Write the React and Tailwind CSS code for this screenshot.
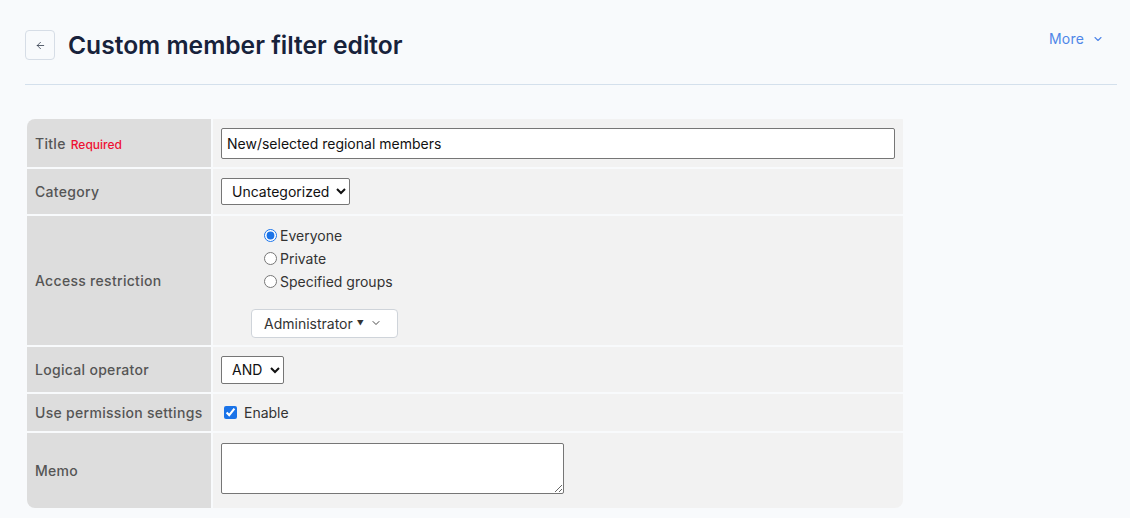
import React from "react";
import { ChevronDown, ArrowLeft } from "lucide-react";

const font = { fontFamily: "Inter, 'Noto Sans', sans-serif" };

function Label({ children }) {
  return (
    <td className="bg-[#dddddd] pl-2 pr-2 align-middle text-[14px] font-medium tracking-[0.3px] text-[#555555] whitespace-nowrap">
      {children}
    </td>
  );
}

function Value({ children, className = "" }) {
  return (
    <td className={"bg-[#f2f2f2] pl-2 align-middle " + className}>{children}</td>
  );
}

export default function App() {
  return (
    <div className="min-h-[518px] w-[1130px] bg-[#f8fafc] text-[#1e293b]" style={font}>
      <div className="flex items-start justify-between pl-[25px] pr-[26px] pt-[30px]">
        <div className="flex items-center gap-[13px]">
          <button className="flex h-[30px] w-[30px] items-center justify-center rounded-[4px] border border-[#d6dde6] bg-[#f8fafc] text-[#1e293b]">
            <ArrowLeft size={11} strokeWidth={1.6} />
          </button>
          <h1 className="text-[24.6px] font-semibold leading-[30px] text-[#17223b]">
            Custom member filter editor
          </h1>
        </div>
        <div className="mt-[-2px] ml-[-2px] flex items-center gap-[8px] text-[14px] tracking-[0.2px] text-[#4f86e8]">
          <span>More</span>
          <ChevronDown size={12} strokeWidth={2.2} />
        </div>
      </div>
      <div className="mx-[25px] mt-[24px] h-px w-[1092px] bg-[#d4e0ec]" />
      <div className="ml-[25px] mt-[32px] w-[880px]">
        <table className="w-[880px] border-separate border-spacing-[2px] overflow-hidden rounded-[8px]">
          <colgroup>
            <col className="w-[184px]" />
            <col />
          </colgroup>
          <tbody>
            <tr className="h-[48px]">
              <td className="rounded-tl-[8px] bg-[#dddddd] pl-2 align-middle text-[14px] font-medium tracking-[0.3px] text-[#555555]">
                Title <span className="ml-[1px] text-[12px] font-medium tracking-[0px] text-[#ee1133]">Required</span>
              </td>
              <Value className="pr-2">
                <input
                  defaultValue="New/selected regional members"
                  className="box-border h-[31px] w-[674px] rounded-[2px] border border-[#767676] bg-white px-[5px] text-[14px] text-[#111] outline-none"
                  style={font}
                />
              </Value>
            </tr>
            <tr className="h-[45px]">
              <Label>Category</Label>
              <Value>
                <select
                  className="h-[27px] w-[129px] rounded-[2px] border border-[#767676] bg-white pl-[6px] text-[14px] text-[#111]"
                  style={font}
                  defaultValue="u"
                >
                  <option value="u">Uncategorized</option>
                </select>
              </Value>
            </tr>
            <tr className="h-[129px]">
              <Label>Access restriction</Label>
              <Value>
                <div className="flex flex-col pl-[40px] text-[14px] text-[#333]">
                  <label className="flex h-[23px] items-center">
                    <input type="radio" name="acc" defaultChecked className="m-[3px] h-[13px] w-[13px] accent-[#1a73e8]" />
                    Everyone
                  </label>
                  <label className="flex h-[23px] items-center">
                    <input type="radio" name="acc" className="m-[3px] h-[13px] w-[13px]" />
                    Private
                  </label>
                  <label className="flex h-[23px] items-center">
                    <input type="radio" name="acc" className="m-[3px] h-[13px] w-[13px]" />
                    Specified groups
                  </label>
                </div>
                <button className="ml-[30px] mt-[16px] flex h-[29px] w-[147px] items-center rounded-[4px] border border-[#cfd4da] bg-white pl-[12px] text-[14px] text-[#333]">
                  Administrator
                  <span className="ml-[4px] text-[7px] leading-none">▼</span>
                  <ChevronDown size={12} strokeWidth={1.8} className="ml-[6px]" />
                </button>
              </Value>
            </tr>
            <tr className="h-[45px]">
              <Label>Logical operator</Label>
              <Value>
                <select
                  className="h-[28px] w-[63px] rounded-[2px] border border-[#767676] bg-white pl-[6px] text-[14px] text-[#111]"
                  style={font}
                  defaultValue="and"
                >
                  <option value="and">AND</option>
                </select>
              </Value>
            </tr>
            <tr className="h-[37px]">
              <Label>Use permission settings</Label>
              <Value>
                <label className="flex items-center text-[14px] text-[#333]">
                  <input type="checkbox" defaultChecked className="ml-[3px] mr-[7px] h-[13px] w-[13px] accent-[#1a73e8]" />
                  Enable
                </label>
              </Value>
            </tr>
            <tr className="h-[75px]">
              <td className="rounded-bl-[8px] bg-[#dddddd] pl-2 align-middle text-[14px] font-medium tracking-[0.3px] text-[#555555]">
                Memo
              </td>
              <td className="rounded-br-[8px] bg-[#f2f2f2] pl-2 align-middle">
                <textarea className="mt-[-5px] box-border block h-[51px] w-[343px] rounded-[2px] border border-[#767676] bg-white" />
              </td>
            </tr>
          </tbody>
        </table>
      </div>
    </div>
  );
}
